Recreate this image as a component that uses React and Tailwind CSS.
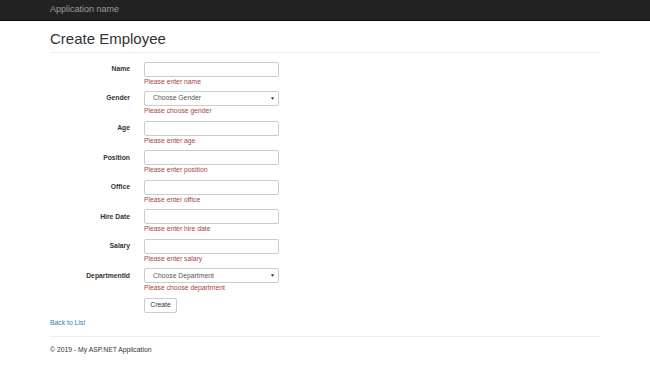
import React from "react";

const fields = [
    { label: "Name", error: "Please enter name" },
    { label: "Gender", error: "Please choose gender", select: "Choose Gender" },
    { label: "Age", error: "Please enter age" },
    { label: "Position", error: "Please enter position" },
    { label: "Office", error: "Please enter office" },
    { label: "Hire Date", error: "Please enter hire date" },
    { label: "Salary", error: "Please enter salary" },
    { label: "DepartmentId", error: "Please choose department", select: "Choose Department" },
];

function Field({ field }) {
    return (
        <div className="flex h-[29.57px]">
            <label className="w-[80px] shrink-0 h-[15px] flex items-center justify-end text-[6.8px] font-bold text-[#333]">
                {field.label}
            </label>
            <div className="ml-[14px] flex flex-col">
                {field.select ? (
                    <div className="w-[135px] h-[15px] border border-[#ccc] rounded-[2px] bg-white flex items-center justify-between pl-[8px] pr-[3px] text-[6.8px] text-[#555]">
                        <span>{field.select}</span>
                        <span className="text-[5px] text-[#333]">▼</span>
                    </div>
                ) : (
                    <input
                        type="text"
                        className="w-[135px] h-[15px] border border-[#ccc] rounded-[2px] bg-white outline-none"
                    />
                )}
                <span className="text-[6.8px] leading-[9px] text-[#a94442]">{field.error}</span>
            </div>
        </div>
    );
}

export default function App() {
    return (
        <div className="min-h-screen bg-white font-['Liberation_Sans',Arial,sans-serif] text-[#333]">
            <div className="h-[21px] bg-[#222] border-b border-[#080808] flex items-center">
                <div className="w-[550px] mx-auto text-[9px] text-[#9d9d9d]">Application name</div>
            </div>
            <div className="w-[550px] mx-auto">
                <h2 className="text-[15px] leading-[17px] mt-[9px] text-[#333]">Create Employee</h2>
                <div className="border-t border-[#eee] mt-[5px] mb-[8.5px]" />
                <form onSubmit={(e) => e.preventDefault()}>
                    {fields.map((f) => (
                        <Field key={f.label} field={f} />
                    ))}
                    <div className="ml-[94px]">
                        <button
                            type="submit"
                            className="w-[33px] h-[15px] border border-[#ccc] rounded-[2px] bg-white text-[6.8px] text-[#333] flex items-center justify-center"
                        >
                            Create
                        </button>
                    </div>
                </form>
                <div className="mt-[5px] text-[6.8px] leading-[9px] text-[#337ab7]">Back to List</div>
                <div className="border-t border-[#eee] mt-[9px]" />
                <div className="mt-[8px] text-[6.8px] leading-[9px]">© 2019 - My ASP.NET Application</div>
            </div>
        </div>
    );
}
